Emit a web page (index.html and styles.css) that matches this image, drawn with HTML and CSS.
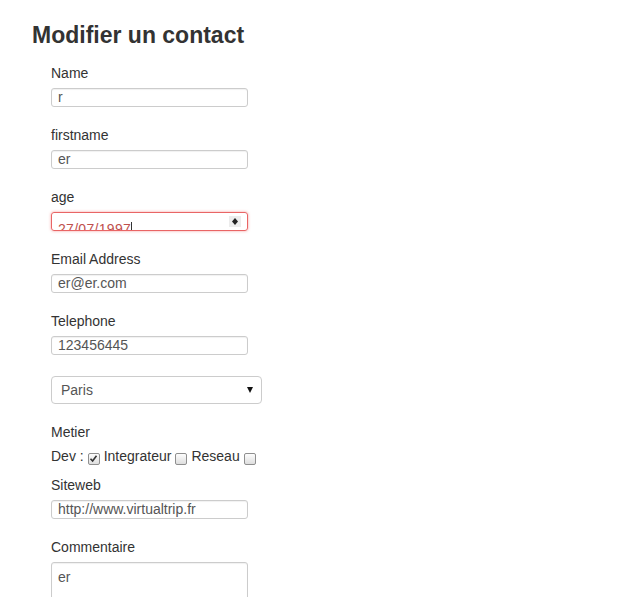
FILE: index.html
```html
<!DOCTYPE html>
<html lang="fr">
<head>
<meta charset="utf-8">
<title>Modifier un contact</title>
<link rel="stylesheet" href="styles.css">
</head>
<body>
<div class="page">
  <h2 class="title">Modifier un contact</h2>
  <form class="form">
    <div class="group">
      <label class="label">Name</label>
      <div class="input">r</div>
    </div>
    <div class="group">
      <label class="label">firstname</label>
      <div class="input">er</div>
    </div>
    <div class="group">
      <label class="label">age</label>
      <div class="input input-error"><span class="date-text">27/07/1997<span class="caret"></span></span>
        <svg class="spin" width="12" height="11" viewBox="0 0 12 11"><rect x="0" y="0" width="12" height="11" fill="#ececec"/><path d="M6 2 L9 5.5 L6 9 L3 5.5 Z" fill="#222"/></svg>
      </div>
    </div>
    <div class="group">
      <label class="label">Email Address</label>
      <div class="input">er@er.com</div>
    </div>
    <div class="group">
      <label class="label">Telephone</label>
      <div class="input">123456445</div>
    </div>
    <div class="group group-select">
      <div class="select"><span>Paris</span><span class="arrow"></span></div>
    </div>
    <div class="group group-metier">
      <label class="label">Metier</label>
      <div class="checks">
        <span class="check-label">Dev :</span>
        <span class="box checked"><svg width="9" height="9" viewBox="0 0 9 9"><path d="M1.5 4.8 L3.6 7 L7.5 1.8" fill="none" stroke="#333" stroke-width="1.6"/></svg></span>
        <span class="check-label">Integrateur</span>
        <span class="box"></span>
        <span class="check-label">Reseau</span>
        <span class="box"></span>
      </div>
    </div>
    <div class="group">
      <label class="label">Siteweb</label>
      <div class="input">http://www.virtualtrip.fr</div>
    </div>
    <div class="group">
      <label class="label">Commentaire</label>
      <div class="input textarea">er</div>
    </div>
  </form>
</div>
</body>
</html>
```

FILE: styles.css
```css
html, body {
  margin: 0;
  padding: 0;
  background: #fff;
}
body {
  font-family: "Liberation Sans", Arial, sans-serif;
  color: #333;
  font-size: 14px;
  line-height: 20px;
}
.page {
  padding: 22px 0 0 32px;
}
.title {
  margin: 0;
  font-size: 23px;
  line-height: 26px;
  font-weight: bold;
  color: #333;
}
.form {
  margin: 15px 0 0 19px;
  display: flex;
  flex-direction: column;
}
.group {
  display: flex;
  flex-direction: column;
  margin-bottom: 18px;
}
.label {
  display: block;
  font-size: 14px;
  line-height: 20px;
  color: #333;
  margin-bottom: 5px;
}
.input {
  box-sizing: border-box;
  width: 197px;
  height: 19px;
  border: 1px solid #ccc;
  border-radius: 3px;
  box-shadow: inset 0 1px 1px rgba(0,0,0,0.06);
  padding: 0 6px;
  font-size: 14px;
  line-height: 17px;
  color: #555;
  white-space: nowrap;
  overflow: hidden;
}
.input-error {
  position: relative;
  border-color: #e96565;
  box-shadow: 0 0 3px rgba(233, 80, 80, 0.55);
}
.date-text {
  display: block;
  padding-top: 8px;
  color: #c0504d;
  letter-spacing: 0.3px;
}
.caret {
  display: inline-block;
  width: 1px;
  height: 14px;
  background: #333;
  vertical-align: -2px;
}
.spin {
  position: absolute;
  right: 6px;
  top: 3px;
}
.group-select {
  margin-top: 3px;
  margin-bottom: 18px;
}
.select {
  box-sizing: border-box;
  width: 211px;
  height: 28px;
  border: 1px solid #ccc;
  border-radius: 4px;
  padding: 0 9px;
  display: flex;
  align-items: center;
  justify-content: space-between;
  color: #555;
  font-size: 14px;
}
.arrow {
  width: 0;
  height: 0;
  border-left: 3px solid transparent;
  border-right: 3px solid transparent;
  border-top: 6px solid #111;
  margin-right: -1px;
}
.group-metier {
  margin-bottom: 9px;
}
.group-metier .label {
  margin-bottom: 4px;
}
.checks {
  display: flex;
  align-items: center;
  gap: 4px;
  line-height: 20px;
}
.check-label {
  color: #333;
}
.box {
  box-sizing: border-box;
  width: 12px;
  height: 12px;
  border: 1px solid #8f8f8f;
  border-radius: 2px;
  background: linear-gradient(#fdfdfd, #dedede);
  margin-top: 5px;
  display: flex;
  align-items: center;
  justify-content: center;
}
.box svg {
  display: block;
}
.textarea {
  height: 70px;
  padding-top: 4px;
  line-height: 20px;
}
```
